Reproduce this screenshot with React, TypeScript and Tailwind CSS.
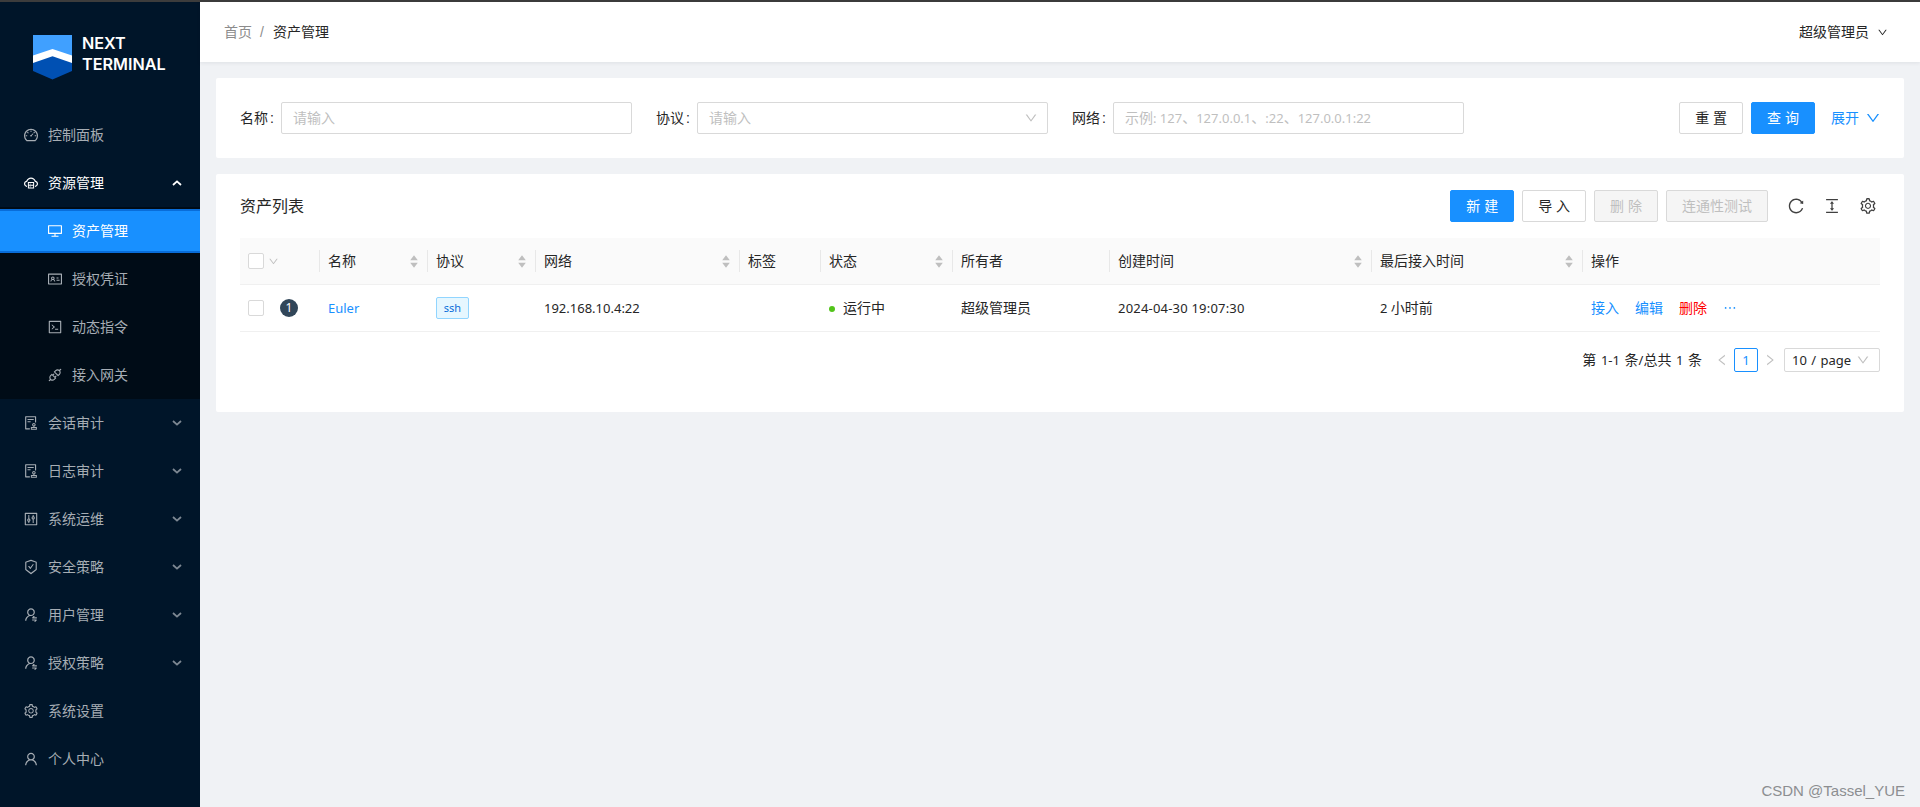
import type { ReactNode } from 'react';
import type { IconType } from 'react-icons';
import {
  AiOutlineApi,
  AiOutlineAudit,
  AiOutlineCloudServer,
  AiOutlineCode,
  AiOutlineColumnHeight,
  AiOutlineControl,
  AiOutlineDashboard,
  AiOutlineDesktop,
  AiOutlineDown,
  AiOutlineEllipsis,
  AiOutlineIdcard,
  AiOutlineLeft,
  AiOutlineReload,
  AiOutlineRight,
  AiOutlineSafetyCertificate,
  AiOutlineSetting,
  AiOutlineUser,
  AiOutlineUserSwitch,
} from 'react-icons/ai';

type MenuEntry = { label: string; icon: IconType; expandable?: boolean };

const subMenu: MenuEntry[] = [
  { label: '授权凭证', icon: AiOutlineIdcard },
  { label: '动态指令', icon: AiOutlineCode },
  { label: '接入网关', icon: AiOutlineApi },
];

const lowerMenu: MenuEntry[] = [
  { label: '会话审计', icon: AiOutlineAudit, expandable: true },
  { label: '日志审计', icon: AiOutlineAudit, expandable: true },
  { label: '系统运维', icon: AiOutlineControl, expandable: true },
  { label: '安全策略', icon: AiOutlineSafetyCertificate, expandable: true },
  { label: '用户管理', icon: AiOutlineUserSwitch, expandable: true },
  { label: '授权策略', icon: AiOutlineUserSwitch, expandable: true },
  { label: '系统设置', icon: AiOutlineSetting },
  { label: '个人中心', icon: AiOutlineUser },
];

function Latin({ children }: { children: ReactNode }) {
  return <span className="font-['Noto_Sans','Noto_Sans_CJK_SC',sans-serif] text-[13px]">{children}</span>;
}

function Arrow({ up = false }: { up?: boolean }) {
  return (
    <svg width="10" height="6" viewBox="0 0 10 6" fill="none" stroke="currentColor" strokeWidth="1.8">
      <path d={up ? 'M1 5 5 1.4 9 5' : 'M1 1 5 4.6 9 1'} />
    </svg>
  );
}

function MenuItem({ label, icon: Icon, expandable }: MenuEntry) {
  return (
    <div className="flex h-12 items-center pl-[23px] pr-[18px]">
      <Icon size={16} className="mr-[9px] shrink-0" />
      <span className="flex-1">{label}</span>
      {expandable && (
        <span className="text-[#7d8893]">
          <Arrow />
        </span>
      )}
    </div>
  );
}

function Logo() {
  return (
    <div className="flex h-[109px] shrink-0 items-start pl-[33px] pt-[33px] text-white">
      <svg width="39" height="45" viewBox="0 0 39 45">
        <path d="M0 0H39V22H0Z" fill="#40a0ff" />
        <path d="M0 20.5 19.5 14 39 20.5V30H0Z" fill="#fff" />
        <path d="M0 28 19.5 21.2 39 28V36L19.5 44.5 0 36Z" fill="#0050b3" />
      </svg>
      <div className="-mt-[2px] ml-[10px] font-['Inter',sans-serif] text-[16.2px] font-semibold leading-[21px]">
        <div>NEXT</div>
        <div>TERMINAL</div>
      </div>
    </div>
  );
}

function Sidebar() {
  return (
    <aside className="flex w-[200px] shrink-0 flex-col bg-[#001529] text-[#a6adb4]">
      <Logo />
      <MenuItem label="控制面板" icon={AiOutlineDashboard} />
      <div className="flex h-12 items-center pl-[23px] pr-[18px] text-white">
        <AiOutlineCloudServer size={16} className="mr-[9px]" />
        <span className="flex-1">资源管理</span>
        <Arrow up />
      </div>
      <div className="bg-[#000c17]">
        <div className="flex h-12 items-center">
          <div className="flex h-11 w-full items-center border-y-2 border-[#096dd9] bg-[#1890ff] pl-[47px] text-white">
            <AiOutlineDesktop size={16} className="mr-[9px]" />
            <span>资产管理</span>
          </div>
        </div>
        {subMenu.map(({ label, icon: Icon }) => (
          <div key={label} className="flex h-12 items-center pl-[47px]">
            <Icon size={16} className="mr-[9px]" />
            <span>{label}</span>
          </div>
        ))}
      </div>
      {lowerMenu.map((item) => (
        <MenuItem key={item.label} {...item} />
      ))}
    </aside>
  );
}

function Button({ children, kind = 'default' }: { children: ReactNode; kind?: 'default' | 'primary' | 'disabled' }) {
  const look = {
    default: 'border-[#d9d9d9] bg-white text-[#262626]',
    primary: 'border-[#1890ff] bg-[#1890ff] text-white',
    disabled: 'border-[#d9d9d9] bg-[#f5f5f5] text-[#bfbfbf]',
  }[kind];
  return (
    <button className={`flex h-8 items-center justify-center rounded-[2px] border px-[15px] ${look}`}>{children}</button>
  );
}

function Field({ label, placeholder, select }: { label: string; placeholder: ReactNode; select?: boolean }) {
  return (
    <div className="flex w-[392px] items-center">
      <span className="w-[41px] shrink-0">
        {label}
        <span className="ml-0.5">:</span>
      </span>
      <div className="flex h-8 flex-1 items-center justify-between rounded-[2px] border border-[#d9d9d9] px-[11px] text-[#bfbfbf]">
        <span>{placeholder}</span>
        {select && <AiOutlineDown size={14} className="-mr-[2px]" />}
      </div>
    </div>
  );
}

function Sorter() {
  return (
    <svg width="8" height="13" viewBox="0 0 8 13" fill="#bfbfbf">
      <path d="M4 .3 7.8 5.2H.2ZM4 12.7 7.8 7.8H.2Z" />
    </svg>
  );
}

const columns = [
  { title: '名称', width: 108, sort: true },
  { title: '协议', width: 108, sort: true },
  { title: '网络', width: 204, sort: true },
  { title: '标签', width: 81 },
  { title: '状态', width: 132, sort: true },
  { title: '所有者', width: 157 },
  { title: '创建时间', width: 262, sort: true },
  { title: '最后接入时间', width: 211, sort: true },
  { title: '操作', width: 297, last: true },
];

function Checkbox() {
  return <span className="block size-4 rounded-[2px] border border-[#d9d9d9] bg-white" />;
}

function AssetTable() {
  return (
    <table className="w-[1640px] table-fixed border-separate border-spacing-0 text-left">
      <colgroup>
        <col style={{ width: 80 }} />
        {columns.map((c) => (
          <col key={c.title} style={{ width: c.width }} />
        ))}
      </colgroup>
      <thead>
        <tr className="h-[47px] bg-[#fafafa] [&>th]:border-b [&>th]:border-[#f0f0f0] [&>th]:p-0 [&>th]:font-normal">
          <th>
            <div className="flex h-[22px] items-center border-r border-[#e8e8e8] pl-2">
              <Checkbox />
              <AiOutlineDown size={11} className="ml-1 text-[#bfbfbf]" />
            </div>
          </th>
          {columns.map((c) => (
            <th key={c.title}>
              <div
                className={`flex h-[22px] items-center justify-between pl-2 pr-[9px] ${c.last ? '' : 'border-r border-[#e8e8e8]'}`}
              >
                {c.title}
                {c.sort && <Sorter />}
              </div>
            </th>
          ))}
        </tr>
      </thead>
      <tbody>
        <tr className="h-[47px] [&>td]:border-b [&>td]:border-[#f0f0f0] [&>td]:py-0 [&>td]:pl-2 [&>td]:pr-0">
          <td>
            <div className="flex items-center">
              <Checkbox />
              <span className="ml-4 flex size-[18px] items-center justify-center rounded-full bg-[#314659] font-['Noto_Sans',sans-serif] text-xs leading-none text-white">
                1
              </span>
            </div>
          </td>
          <td className="text-[#1890ff]">
            <Latin>Euler</Latin>
          </td>
          <td>
            <span className="flex h-[22px] w-[33px] items-center justify-center rounded-[2px] border border-[#91d5ff] bg-[#e6f7ff] font-['Noto_Sans',sans-serif] text-[11px] text-[#096dd9]">
              ssh
            </span>
          </td>
          <td>
            <Latin>192.168.10.4:22</Latin>
          </td>
          <td />
          <td>
            <div className="flex items-center">
              <span className="mr-2 mt-0.5 size-1.5 rounded-full bg-[#52c41a]" />
              运行中
            </div>
          </td>
          <td>超级管理员</td>
          <td className="tracking-[0.2px]">
            <Latin>2024-04-30 19:07:30</Latin>
          </td>
          <td>
            <Latin>2 </Latin>小时前
          </td>
          <td>
            <div className="flex items-center gap-4 text-[#1890ff]">
              <span>接入</span>
              <span>编辑</span>
              <span className="text-[#ff0000]">删除</span>
              <AiOutlineEllipsis size={16} className="-ml-px" />
            </div>
          </td>
        </tr>
      </tbody>
    </table>
  );
}

export default function App() {
  return (
    <div className="relative flex h-[807px] w-[1920px] flex-col overflow-hidden bg-[#f0f2f5] font-['Liberation_Sans','Noto_Sans_CJK_SC',sans-serif] text-sm leading-[22px] text-[#262626]">
      <div className="h-0.5 shrink-0 bg-[#3c3c3c]" />
      <div className="flex flex-1">
        <Sidebar />
        <div className="flex min-w-0 flex-1 flex-col">
          <header className="flex h-[60px] shrink-0 items-center justify-between bg-white pl-6 pr-8 shadow-[0_1px_4px_rgba(0,21,41,0.08)]">
            <div className="flex">
              <span className="text-[#8c8c8c]">首页</span>
              <span className="mx-2 w-[5px] text-[#8c8c8c]">/</span>
              <span>资产管理</span>
            </div>
            <div className="flex items-center">
              超级管理员
              <AiOutlineDown size={11} className="ml-2" />
            </div>
          </header>
          <main className="flex flex-col gap-4 p-4">
            <section className="flex h-20 items-center gap-6 rounded-[2px] bg-white px-6">
              <Field label="名称" placeholder="请输入" />
              <Field label="协议" placeholder="请输入" select />
              <Field
                label="网络"
                placeholder={
                  <>
                    示例<Latin>: 127</Latin>、<Latin>127.0.0.1</Latin>、<Latin>:22</Latin>、<Latin>127.0.0.1:22</Latin>
                  </>
                }
              />
              <div className="ml-auto flex items-center gap-2">
                <Button>重&nbsp;置</Button>
                <Button kind="primary">查&nbsp;询</Button>
                <div className="ml-2 flex items-center text-[#1890ff]">
                  展开
                  <AiOutlineDown size={16} className="-mr-px ml-1.5" />
                </div>
              </div>
            </section>
            <section className="h-[238px] rounded-[2px] bg-white px-6">
              <div className="flex h-16 items-center justify-between">
                <h1 className="pt-0.5 text-base">资产列表</h1>
                <div className="flex items-center gap-2">
                  <Button kind="primary">新&nbsp;建</Button>
                  <Button>导&nbsp;入</Button>
                  <Button kind="disabled">删&nbsp;除</Button>
                  <Button kind="disabled">连通性测试</Button>
                  <div className="ml-[11px] mr-[3px] flex items-center gap-[18px] text-[#404040]">
                    <AiOutlineReload size={18} />
                    <AiOutlineColumnHeight size={18} />
                    <AiOutlineSetting size={18} />
                  </div>
                </div>
              </div>
              <AssetTable />
              <div className="mt-4 flex h-6 items-center justify-end">
                <span className="mr-2 [word-spacing:1.2px]">
                  第<Latin> 1-1 </Latin>条<Latin>/</Latin>总共<Latin> 1 </Latin>条
                </span>
                <span className="flex w-6 justify-center text-[#bfbfbf]">
                  <AiOutlineLeft size={14} />
                </span>
                <span className="flex size-6 items-center justify-center rounded-[2px] border border-[#1890ff] text-[#1890ff]">
                  <Latin>1</Latin>
                </span>
                <span className="flex w-6 justify-center text-[#bfbfbf]">
                  <AiOutlineRight size={14} />
                </span>
                <span className="ml-0.5 flex h-6 w-24 items-center justify-between rounded-[2px] border border-[#d9d9d9] pl-[7px] pr-[9px] [word-spacing:1px]">
                  <Latin>10 / page</Latin>
                  <AiOutlineDown size={14} className="text-[#bfbfbf]" />
                </span>
              </div>
            </section>
          </main>
        </div>
      </div>
      <div className="absolute bottom-[5px] right-[15px] whitespace-nowrap text-[15px] text-[#8c8e91]">
        CSDN @Tassel_YUE
      </div>
    </div>
  );
}
